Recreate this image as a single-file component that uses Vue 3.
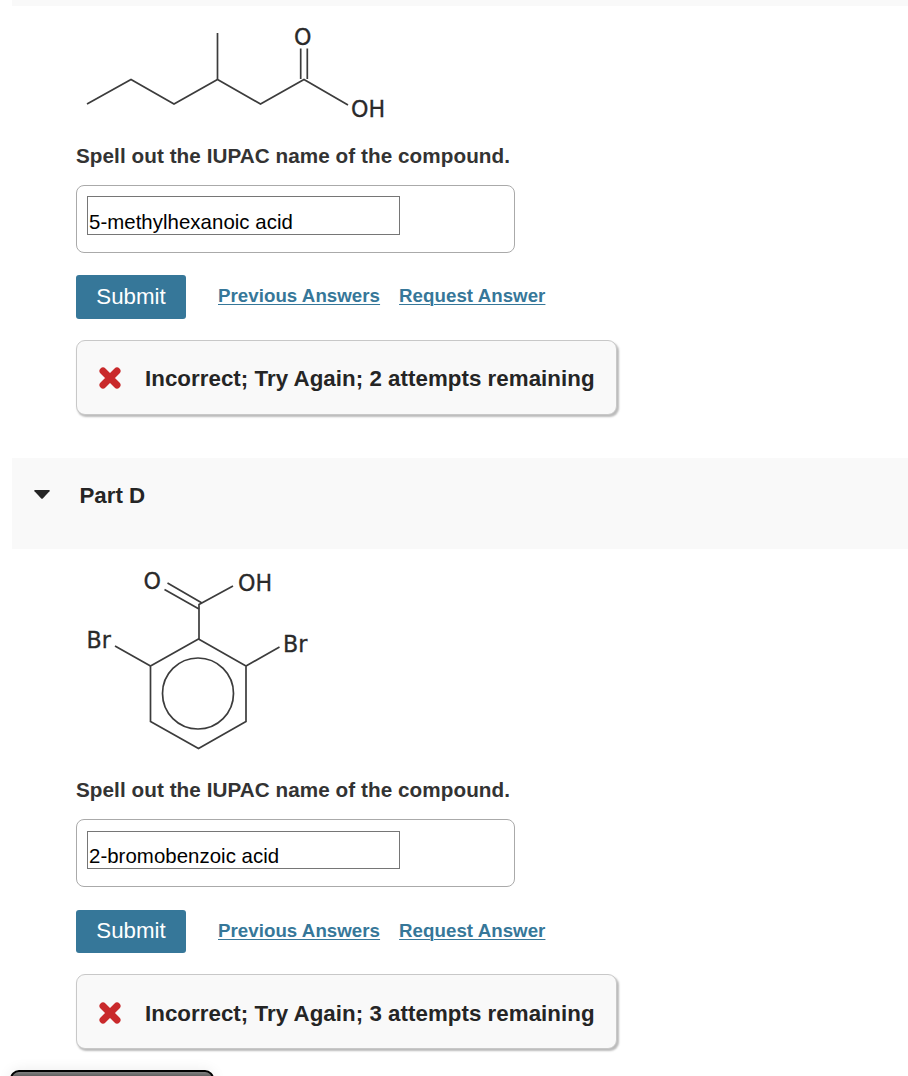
<template>
  <div class="page">
    <div class="strip"></div>

    <template v-for="part in parts" :key="part.id">
      <!-- Part header -->
      <header v-if="part.title" class="part-header">
        <svg class="part-header__arrow" viewBox="0 0 18 12">
          <path d="M2 1H16Q17.400 1 16.500 2.200L10 9.300Q9 10.300 8 9.300L1.500 2.200Q.6 1 2 1Z" fill="#252525" />
        </svg>
        <h2 class="part-header__title">{{ part.title }}</h2>
      </header>

      <section class="part" :class="`part--${part.id}`">
        <!-- 3-methylhexanoic acid skeleton -->
        <svg v-if="part.id === 'c'" class="molecule" viewBox="76 6 340 130">
          <g class="bonds">
            <path d="M87 104L131 79.500L174 104L217.500 79.500L260.500 104L304 79.500L348 105" />
            <path d="M217.500 79.500V33M300.700 79V48.500M307.300 79V48.500" />
          </g>
          <text class="atom" x="294" y="44.500">O</text>
          <text class="atom" x="351" y="117">OH</text>
        </svg>

        <!-- 2,6-dibromobenzoic acid skeleton -->
        <svg v-else class="molecule" viewBox="76 549 340 220">
          <g class="bonds">
            <path d="M198.500 639L246 666V721.500L198.500 748.500L150.500 721.500V666Z" />
            <path d="M199 639V604.500L233 586M150.500 666L115 646M246 666L279.500 647" />
            <path d="M167.500 583L202 603M164.500 589.500L199 609" />
            <circle cx="198" cy="693.500" r="35.500" />
          </g>
          <text class="atom" x="143.500" y="589">O</text>
          <text class="atom" x="238" y="590.500">OH</text>
          <text class="atom" x="86.500" y="648">Br</text>
          <text class="atom" x="283" y="651.500">Br</text>
        </svg>

        <p class="prompt">Spell out the IUPAC name of the compound.</p>

        <div class="answer">
          <input v-model="part.answer" class="answer__input" type="text" />
        </div>

        <div class="actions">
          <button class="submit" type="button">Submit</button>
          <a class="link link--previous">Previous Answers</a>
          <a class="link link--request">Request Answer</a>
        </div>

        <div class="feedback">
          <svg class="feedback__icon" viewBox="0 0 22 22">
            <path d="M4 4L18 18M18 4L4 18" />
          </svg>
          <span class="feedback__text">Incorrect; Try Again; {{ part.attempts }} attempts remaining</span>
        </div>
      </section>
    </template>

    <div class="status-bar"></div>
  </div>
</template>

<script setup>
import { ref } from 'vue'

const parts = ref([
  { id: 'c', title: '', answer: '5-methylhexanoic acid', attempts: 2 },
  { id: 'd', title: 'Part D', answer: '2-bromobenzoic acid', attempts: 3 }
])
</script>

<style>
body {
  background: #fff;
}
</style>

<style scoped>
.page {
  position: relative;
  box-sizing: border-box;
  width: 100%;
  height: 1076px;
  padding-left: 12px;
  overflow: hidden;
  font-family: "Liberation Sans", Arial, sans-serif;
}

.strip {
  height: 6px;
  background: #f9f9f9;
}

/* Part header */
.part-header {
  display: flex;
  box-sizing: border-box;
  height: 91px;
  padding: 25px 0 0 21px;
  background: #f9f9f9;
}

.part-header__arrow {
  width: 18px;
  height: 12px;
  margin-top: 6px;
}

.part-header__title {
  margin: 0 0 0 28.500px;
  color: #252525;
  font-size: 22.300px;
  line-height: 26px;
}

/* Part body */
.part {
  display: flex;
  flex-direction: column;
  align-items: flex-start;
  padding-left: 64px;
}

.part--c {
  height: 452px;
}

.molecule {
  display: block;
  width: 340px;
  height: 130px;
}

.part--d .molecule {
  height: 220px;
}

.bonds {
  fill: none;
  stroke: #3c3c3c;
  stroke-width: 1.700;
}

.atom {
  fill: #2a2a2a;
  stroke: #2a2a2a;
  stroke-width: 0.300;
  font-family: "DejaVu Sans", Verdana, sans-serif;
  font-size: 22.200px;
}

.prompt {
  height: 26px;
  margin: 7px 0 16px;
  color: #333;
  font-size: 20.700px;
  font-weight: 700;
  letter-spacing: 0.055px;
  line-height: 26px;
  white-space: nowrap;
}

.part--d .prompt {
  margin-top: 8px;
}

.answer {
  box-sizing: border-box;
  width: 439px;
  height: 68px;
  padding: 10px;
  border: 1px solid #aaa;
  border-radius: 8px;
}

.answer__input {
  display: block;
  box-sizing: border-box;
  width: 313px;
  height: 39px;
  padding: 13px 1px 0;
  border: 1px solid #767676;
  border-radius: 0;
  color: #000;
  font-family: inherit;
  font-size: 20.400px;
  letter-spacing: 0.050px;
}

.part--d .answer {
  padding-top: 11px;
}

.part--d .answer__input {
  height: 38px;
}

.actions {
  display: flex;
  align-items: flex-start;
  height: 44px;
  margin-top: 22px;
}

.submit {
  width: 110px;
  height: 44px;
  padding: 0;
  border: 0;
  border-radius: 3px;
  background: #367799;
  color: #fff;
  font-family: inherit;
  font-size: 22.300px;
}

.part--d .actions {
  height: 43px;
  margin-top: 23px;
}

.part--d .submit {
  height: 43px;
  padding-bottom: 2px;
}

.link {
  margin-top: 10px;
  color: #367799;
  font-size: 18.700px;
  font-weight: 700;
  letter-spacing: 0.045px;
  line-height: 22px;
  text-decoration: underline;
  text-decoration-thickness: 1px;
  text-underline-offset: 2px;
  white-space: nowrap;
}

.link--previous {
  margin-left: 32px;
}

.link--request {
  margin-left: 19px;
}

/* Feedback */
.feedback {
  display: flex;
  align-items: center;
  box-sizing: border-box;
  width: 541px;
  height: 75px;
  margin-top: 21px;
  padding-left: 22px;
  border: 1px solid #c8c8c8;
  border-radius: 9px;
  background: #f9f9f9;
  box-shadow: 1.500px 2px 2px #bbb;
}

.feedback__icon {
  width: 22px;
  height: 22px;
  fill: none;
  stroke: #c9292b;
  stroke-width: 7;
  stroke-linecap: round;
}

.feedback__text {
  margin-left: 24px;
  padding-top: 2px;
  color: #252525;
  font-size: 22.300px;
  font-weight: 700;
  letter-spacing: 0.045px;
  white-space: nowrap;
}

.part--d .feedback {
  padding-top: 2px;
}

/* Browser link preview peeking over the bottom edge */
.status-bar {
  position: absolute;
  bottom: -20px;
  left: 10px;
  box-sizing: border-box;
  width: 204px;
  height: 26px;
  border: 2px solid #000;
  border-radius: 9px;
  background: linear-gradient(#808080, #606060 4px);
  box-shadow: 0 0 14px rgba(0, 0, 0, 0.08);
}
</style>
